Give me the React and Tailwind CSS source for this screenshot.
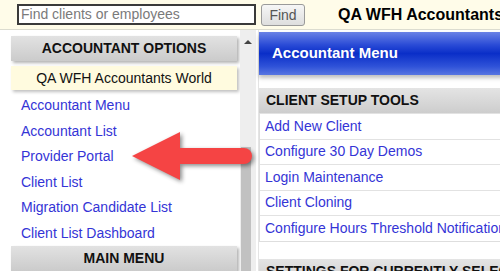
const sideLinks = [
  'Accountant Menu',
  'Accountant List',
  'Provider Portal',
  'Client List',
  'Migration Candidate List',
  'Client List Dashboard',
]

const setupLinks = [
  'Add New Client',
  'Configure 30 Day Demos',
  'Login Maintenance',
  'Client Cloning',
  'Configure Hours Threshold Notifications',
]

export default function App() {
  return (
    <div className="relative w-[500px] h-[271px] overflow-hidden bg-white font-['Liberation_Sans',Arial,sans-serif] text-[14px]">
      {/* Top search bar */}
      <div className="flex items-center h-[30px] bg-[#fffce9] border-b border-[#dcdcd0] whitespace-nowrap overflow-hidden">
        <input
          className="shrink-0 ml-[17px] w-[239px] h-[21px] px-[2px] border-2 border-[#3a3a3a] bg-white text-[14px] placeholder:text-[#7a7a7a] outline-none"
          placeholder="Find clients or employees"
        />
        <button className="shrink-0 ml-[5px] h-[22px] w-[44px] rounded-[3px] border border-[#9a9a9a] bg-[linear-gradient(#f6f6f6,#dedede)] text-[14px] text-[#555]">
          Find
        </button>
        <span className="shrink-0 ml-[33px] text-[16px] font-bold text-black">QA WFH Accountants World</span>
      </div>

      <div className="flex">
        {/* Sidebar */}
        <div className="w-[240px] shrink-0 pl-[11px] pr-[3px] pt-[6px]">
          <div className="h-[25px] flex items-center justify-center font-bold text-[#111] bg-[linear-gradient(#e2e2e2,#cbcbcb)] shadow-[2px_2px_3px_rgba(0,0,0,0.3)]">
            ACCOUNTANT OPTIONS
          </div>
          <div className="mt-[5px] h-[24px] flex items-center justify-center text-[#111] bg-[#fffbdf] shadow-[2px_2px_3px_rgba(0,0,0,0.25)]">
            QA WFH Accountants World
          </div>
          <div className="pt-[3px]">
            {sideLinks.map((l) => (
              <div key={l} className="h-[25.5px] flex items-center pl-[10px] text-[#3434d6]">
                {l}
              </div>
            ))}
          </div>
          <div className="h-[25px] flex items-center justify-center font-bold text-[#111] bg-[linear-gradient(#e2e2e2,#cbcbcb)] shadow-[2px_2px_3px_rgba(0,0,0,0.3)]">
            MAIN MENU
          </div>
        </div>

        {/* Scrollbar */}
        <div className="w-[16px] shrink-0 h-[241px] bg-[#eeeeee] flex flex-col items-center">
          <div className="mt-[10px] w-0 h-0 border-l-[4px] border-r-[4px] border-b-[4px] border-l-transparent border-r-transparent border-b-[#444]" />
          <div className="mt-[103px] w-[10px] flex-1 bg-[#c1c1c1] self-start ml-[1px]" />
        </div>

        {/* Right panel */}
        <div className="ml-[2px] flex-1 pt-[2px] border-l border-[#e4e4e4] whitespace-nowrap">
          <div className="h-[43px] flex items-center pl-[13px] text-[15px] font-bold text-white bg-[linear-gradient(#6a82e6_0%,#2a4bd6_30%,#0a2ec8_50%,#2f52d8_80%,#5876e2_100%)] shadow-[0_3px_4px_rgba(0,0,0,0.25)]">
            Accountant Menu
          </div>
          <div className="mt-[13px] h-[25px] flex items-center pl-[7px] font-bold text-[#111] bg-[linear-gradient(#e4e4e4,#cdcdcd)]">
            CLIENT SETUP TOOLS
          </div>
          <div className="border-l border-b border-[#dedede]">
            {setupLinks.map((l) => (
              <div key={l} className="h-[25.5px] flex items-center pl-[5px] border-t border-[#e2e2e2] text-[#3434d6]">
                {l}
              </div>
            ))}
          </div>
          <div className="mt-[17px] h-[25px] flex items-center pl-[7px] font-bold text-[#111] bg-[linear-gradient(#e4e4e4,#cdcdcd)]">
            SETTINGS FOR CURRENTLY SELECTED CLIENT
          </div>
        </div>
      </div>

      {/* Red callout arrow */}
      <svg
        className="absolute left-[120px] top-[125px] drop-shadow-[2px_2px_2px_rgba(0,0,0,0.45)]"
        width="140"
        height="60"
        viewBox="0 0 140 60"
      >
        <path d="M12 31 L60 7 L60 23 L124 23 A8 8 0 0 1 124 39 L60 39 L60 55 Z" fill="#f54444" />
      </svg>
    </div>
  )
}
